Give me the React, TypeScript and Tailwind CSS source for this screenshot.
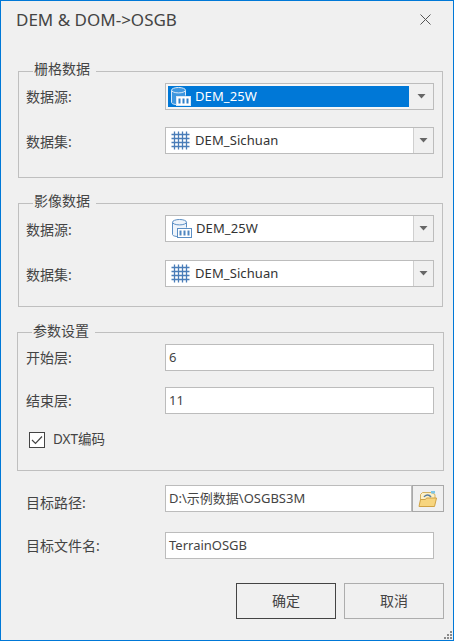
const font = "font-['Noto_Sans','Noto_Sans_CJK_SC',sans-serif]";

function DbIcon({ light }: { light?: boolean }) {
  const c = light ? "#dbe9f7" : "#5b8ec4";
  const fill = light ? "#3f97df" : "#eef4fb";
  const cell = light ? "#2f7fc9" : "#4f86c0";
  return (
    <svg width="21" height="21" viewBox="0 0 21 21" className="shrink-0">
      <path d="M1.5 4.2v12.3c0 1.2 2.5 2 6 2.1h1v-8h7.500V4.200z" fill={fill} />
      <path d="M1.5 4.2v12.3c0 1.2 2.5 2 6 2.1M15.5 4.2v5.3" fill="none" stroke={c} strokeWidth="1" />
      <ellipse cx="8.5" cy="4.2" rx="7" ry="2.7" fill={fill} stroke={c} strokeWidth="1" />
      <rect x="6.5" y="10.500" width="14" height="9" fill="#ffffff" stroke={c} strokeWidth="1" />
      <rect x="8.5" y="12.5" width="2" height="5" fill={cell} />
      <rect x="12.5" y="12.5" width="2" height="5" fill={cell} />
      <rect x="16.5" y="12.5" width="2" height="5" fill={cell} />
    </svg>
  );
}

function GridIcon() {
  const c = "#4a7db8";
  return (
    <svg width="19" height="19" viewBox="0 0 19 19" className="shrink-0">
      <g stroke={c} strokeWidth="1.3">
        <path d="M3.5 0.5v18M7.5 0.5v18M11.5 0.5v18M15.5 0.5v18" />
        <path d="M0.5 3.5h18M0.5 7.5h18M0.5 11.5h18M0.5 15.5h18" />
      </g>
    </svg>
  );
}

function Arrow() {
  return (
    <svg width="9" height="5" viewBox="0 0 9 5">
      <path d="M0.500 0h8L4.500 4.500z" fill="#666666" />
    </svg>
  );
}

function Combo({ icon, text, selected }: { icon: "db" | "grid"; text: string; selected?: boolean }) {
  return (
    <div className={`w-[269px] h-[27px] flex border border-[#bcbcbc] ${selected ? "bg-[#f7f7f7]" : "bg-white"}`}>
      <div className={`flex-1 min-w-0 ${selected ? "p-[2px] pr-0" : ""}`}>
        <div className={`h-full flex items-center ${selected ? "bg-[#0078d7] text-white pl-[2px]" : "pl-[5px] text-[#333333]"} gap-[4px]`}>
          {icon === "db" ? <DbIcon light={selected} /> : <GridIcon />}
          <span className={`text-[13px] leading-none tracking-[0.1px] ${icon === "grid" ? "ml-[1px]" : ""}`}>{text}</span>
        </div>
      </div>
      <div className={`${selected ? "w-[24px]" : "w-[20px] border-l border-[#cfcfcf]"} flex items-center justify-center bg-[#f0f0f0]`}>
        <Arrow />
      </div>
    </div>
  );
}

function Row({ label, children, className = "", labelClass = "" }: { label: string; children: React.ReactNode; className?: string; labelClass?: string }) {
  return (
    <div className={`flex items-center ${className}`}>
      <span className={`w-[139px] text-[14px] leading-none text-[#444444] shrink-0 ${labelClass}`}>{label}</span>
      {children}
    </div>
  );
}

function Group({ title, className = "", children, legendClass = "left-[14px] -top-[12px]" }: { title: string; className?: string; children: React.ReactNode; legendClass?: string }) {
  return (
    <div className={`relative border border-[#bfbfbf] ${className}`}>
      <span className={`absolute bg-[#f0f0f0] px-[1px] pr-[6px] text-[14px] leading-[17px] text-[#444444] ${legendClass}`}>
        {title}
      </span>
      {children}
    </div>
  );
}

function Input({ value, className = "w-[269px]" }: { value: string; className?: string }) {
  return (
    <div className={`h-[27px] border border-[#bcbcbc] bg-white flex items-center pl-[3px] text-[13px] leading-none text-[#444444] ${className}`}>
      {value}
    </div>
  );
}

export default function App() {
  return (
    <div className={`w-[454px] h-[641px] relative bg-[#f0f0f0] border border-[#0078d7] overflow-hidden flex flex-col ${font}`}>
      <div className="flex items-center justify-between h-[36px] pl-[15px] pr-[22px]">
        <span className="text-[17px] leading-none text-[#444444]">DEM &amp; DOM-&gt;OSGB</span>
        <svg width="11" height="11" viewBox="0 0 11 11">
          <path d="M0.5 0.5l10 10M10.5 0.5l-10 10" stroke="#555555" strokeWidth="1" />
        </svg>
      </div>

      <Group title="栅格数据" className="ml-[17px] mr-[10px] mt-[34px] h-[107px] pl-[7px] pt-[11px]">
        <Row label="数据源:"><Combo icon="db" text="DEM_25W" selected /></Row>
        <Row label="数据集:" className="mt-[17px]" labelClass="pt-[2px]"><Combo icon="grid" text="DEM_Sichuan" /></Row>
      </Group>

      <Group title="影像数据" className="ml-[17px] mr-[10px] mt-[25px] h-[104px] pl-[7px] pt-[11px]">
        <Row label="数据源:" labelClass="pt-[2px]"><Combo icon="db" text="DEM_25W" /></Row>
        <Row label="数据集:" className="mt-[18px]" labelClass="pt-[2px]"><Combo icon="grid" text="DEM_Sichuan" /></Row>
      </Group>

      <Group title="参数设置" legendClass="left-[14px] -top-[11px]" className="ml-[16px] mr-[9px] mt-[25px] h-[139px] pl-[8px] pt-[11px]">
        <Row label="开始层:"><Input value="6" /></Row>
        <Row label="结束层:" className="mt-[16px]"><Input value="11" /></Row>
        <div className="flex items-center mt-[18px] ml-[3px] gap-[8px]">
          <div className="w-[16px] h-[16px] border border-[#444444] bg-white flex items-center justify-center">
            <svg width="12" height="10" viewBox="0 0 12 10">
              <path d="M1 5l3.5 3.5L11 1.5" fill="none" stroke="#444444" strokeWidth="1.2" />
            </svg>
          </div>
          <span className="text-[13.5px] leading-none text-[#444444]">DXT编码</span>
        </div>
      </Group>

      <div className="flex items-center mt-[14px] ml-[25px]">
        <span className="w-[139px] text-[14px] leading-none text-[#444444] shrink-0 pt-[8px]">目标路径:</span>
        <Input value="D:\示例数据\OSGBS3M" className="w-[247px]" />
        <div className="w-[32px] h-[27px] border border-[#a9a9a9] bg-[#f0f0f0] flex items-center justify-center">
          <svg width="20" height="18" viewBox="0 0 20 18">
            <path d="M2.5 16V4.5l2-2h9l3.500 2V8" fill="#fdf1c8" stroke="#d4b15e" strokeWidth="1" />
            <path d="M13 1h4v2.500h-4z" fill="#7cc6e8" />
            <path d="M1 16.5l1.500-7h5l1-1.500h10l-2 8.500z" fill="#f7d57e" stroke="#d0a244" strokeWidth="1" />
            <path d="M6 7c1.500-2.500 5-3 7 0" fill="none" stroke="#5c7e9e" strokeWidth="1.400" />
          </svg>
        </div>
      </div>

      <div className="flex items-center mt-[20px] ml-[25px]">
        <span className="w-[139px] text-[14px] leading-none text-[#444444] shrink-0">目标文件名:</span>
        <Input value="TerrainOSGB" />
      </div>

      <div className="flex justify-end gap-[8px] mt-[24px] mr-[9px]">
        <div className="w-[100px] h-[36px] border border-[#444444] flex items-center justify-center text-[14px] leading-none text-[#444444]">确定</div>
        <div className="w-[100px] h-[36px] border border-[#adadad] flex items-center justify-center text-[14px] leading-none text-[#444444]">取消</div>
      </div>

      <svg width="10" height="10" viewBox="0 0 10 10" className="absolute right-0 bottom-0">
        <g fill="#8a8a8a">
          <rect x="7" y="1" width="2" height="2" />
          <rect x="4" y="4" width="2" height="2" />
          <rect x="7" y="4" width="2" height="2" />
          <rect x="1" y="7" width="2" height="2" />
          <rect x="4" y="7" width="2" height="2" />
          <rect x="7" y="7" width="2" height="2" />
        </g>
      </svg>
    </div>
  );
}
